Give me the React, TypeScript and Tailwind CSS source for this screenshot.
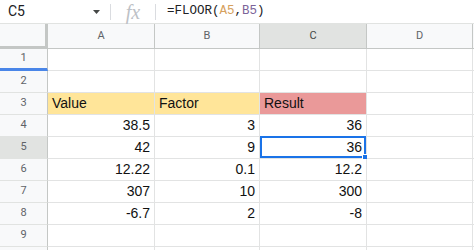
import React from 'react';

const columns = ['A', 'B', 'C', 'D', ''];

const rows: string[][] = [
  ['', '', ''],
  ['', '', ''],
  ['Value', 'Factor', 'Result'],
  ['38.5', '3', '36'],
  ['42', '9', '36'],
  ['12.22', '0.1', '12.2'],
  ['307', '10', '300'],
  ['-6.7', '2', '-8'],
  ['', '', ''],
  ['', '', ''],
];

const SELECTED_ROW = 5;
const SELECTED_COL = 'C';

const FormulaBar = () => (
  <div className="flex h-[24px] items-center border-b border-[#e1e3e1] bg-white">
    <div className="flex w-[110px] items-center pl-[8px] pr-[10px]">
      <span className="flex-1 text-[14px] text-[#202124] [font-family:Roboto,sans-serif]">C5</span>
      <svg width="7" height="4" viewBox="0 0 7 4">
        <path d="M0 0 L7 0 L3.5 4 Z" fill="#444746" />
      </svg>
    </div>
    <div className="h-[16px] w-px bg-[#dadce0]" />
    <div className="flex w-[44px] justify-center">
      <span className="text-[20px] italic leading-none text-[#bdc1c6] [font-family:'Liberation_Serif',serif]">fx</span>
    </div>
    <div className="h-[16px] w-px bg-[#dadce0]" />
    <div className="pl-[11px] text-[12.5px] text-[#202124] [font-family:'Liberation_Mono',monospace]">
      =FLOOR(<span className="text-[#d6a15e]">A5</span>,<span className="text-[#7c6499]">B5</span>)
    </div>
  </div>
);

// row 3 holds the coloured header cells
const cellBg = (rowNum: number, colIdx: number) => {
  if (rowNum !== 3 || colIdx > 2) return 'bg-white';
  return colIdx === 2 ? 'bg-[#ea9999]' : 'bg-[#ffe599]';
};

export default function App() {
  return (
    <div className="h-[250px] w-[474px] overflow-hidden bg-white">
      <FormulaBar />

      <div className="grid grid-cols-[48px_107px_105px_107px_106px_1fr]">
        {/* Header row */}
        <div className="h-[25px] border-b-[3px] border-r-[3px] border-[#c4c7c5] bg-[#f8f9fa]" />
        {columns.map((col, i) => (
          <div
            key={i}
            className={`flex h-[25px] items-center justify-center border-b border-r border-[#c4c7c5] text-[11px] [font-family:Roboto,sans-serif] ${
              col === SELECTED_COL ? 'bg-[#e1e3e1] text-[#444746]' : 'bg-[#f8f9fa] text-[#5f6368]'
            }`}
          >
            {col}
          </div>
        ))}

        {/* Data rows */}
        {rows.map((row, r) => {
          const rowNum = r + 1;
          return (
            <React.Fragment key={rowNum}>
              <div
                className={`flex h-[22px] items-center justify-center border-r border-[#c4c7c5] text-[11px] text-[#5f6368] [font-family:Roboto,sans-serif] ${
                  rowNum === 1 ? 'border-b-[3px] border-b-[#4a86e8]' : 'border-b border-b-[#e1e3e1]'
                } ${rowNum === SELECTED_ROW ? 'bg-[#e1e3e1]' : 'bg-[#f8f9fa]'}`}
              >
                {rowNum < 10 ? rowNum : ''}
              </div>
              {[0, 1, 2, 3, 4].map(c => {
                const value = row[c] ?? '';
                const isText = rowNum === 3;
                const selected = rowNum === SELECTED_ROW && c === 2;
                return (
                  <div
                    key={c}
                    className={`relative flex h-[22px] items-end border-b border-r border-[#e2e3e3] px-[4px] pb-[2px] text-[14px] leading-[18px] text-[#111] [font-family:'Liberation_Sans',Arial,sans-serif] ${
                      isText ? 'justify-start' : 'justify-end'
                    } ${cellBg(rowNum, c)}`}
                  >
                    {value}
                    {selected && (
                      <div className="absolute -top-px bottom-0 left-0 right-0 border-2 border-[#1a73e8]">
                        <div className="absolute -bottom-[4px] -right-[4px] h-[6px] w-[6px] border border-white bg-[#1a73e8]" />
                      </div>
                    )}
                  </div>
                );
              })}
            </React.Fragment>
          );
        })}
      </div>
    </div>
  );
}
